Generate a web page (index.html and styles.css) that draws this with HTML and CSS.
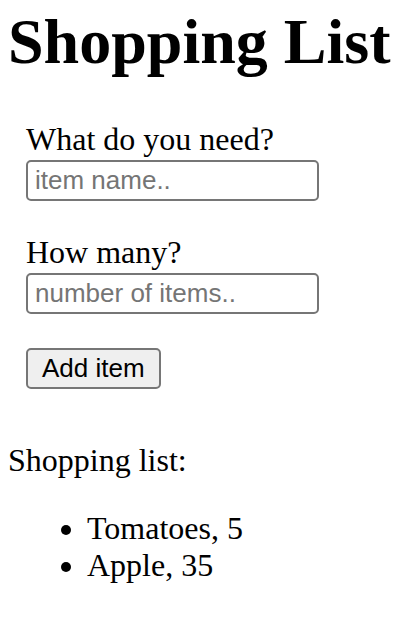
FILE: index.html
```html
<!DOCTYPE html>
<html lang="en">
<head>
  <meta charset="UTF-8" />
  <meta name="viewport" content="width=device-width, initial-scale=1.0" />
  <title>Shopping List</title>
  <link rel="stylesheet" href="styles.css">
</head>
<body>
  <h1>Shopping List</h1>
  <!-- Add item form -->
  <form class="item-form">
    <label for="itemName">What do you need?</label>
    <input type="text" id="itemName" placeholder="item name.." />
    <label for="itemCount" class="second">How many?</label>
    <input type="text" id="itemCount" placeholder="number of items.." />
    <button type="button" id="addButton">Add item</button>
  </form>
  <!-- List -->
  <p class="list-title">Shopping list:</p>
  <ul class="shopping-list">
    <li>Tomatoes, 5</li>
    <li>Apple, 35</li>
  </ul>
</body>
</html>
```

FILE: styles.css
```css
/* Global Styles */
html, body {
  background: #fff;
}
body {
  margin: 0;
  padding: 5px 8px 0;
  font-family: 'Liberation Serif', 'Times New Roman', serif;
  font-size: 32px;
  line-height: 37px;
  color: #000;
}
h1 {
  margin: 0;
  font-size: 64px;
  line-height: 74px;
  font-weight: bold;
}
/* Form */
.item-form {
  display: flex;
  flex-direction: column;
  align-items: flex-start;
  margin: 42px 0 0 18px;
}
.item-form label {
  display: block;
}
.item-form label.second {
  margin-top: 33px;
}
.item-form input {
  box-sizing: border-box;
  width: 293px;
  height: 41px;
  margin-top: 2px;
  padding: 0 7px;
  border: 2px solid #767676;
  border-radius: 5px;
  font-family: 'Liberation Sans', Arial, sans-serif;
  font-size: 26px;
  color: #000;
  background: #fff;
}
.item-form input::placeholder {
  color: #757575;
}
.item-form button {
  box-sizing: border-box;
  height: 41px;
  margin-top: 34px;
  padding: 0 14px;
  border: 2px solid #767676;
  border-radius: 5px;
  background: #efefef;
  font-family: 'Liberation Sans', Arial, sans-serif;
  font-size: 26px;
  color: #000;
}
/* List */
.list-title {
  margin: 53px 0 0;
}
.shopping-list {
  margin: 31px 0 0;
  padding-left: 79px;
}
```
